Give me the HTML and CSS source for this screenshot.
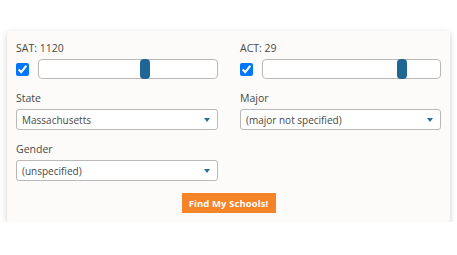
FILE: index.html
```html
<!DOCTYPE html>
<html lang="en">
  <head>
    <meta charset="UTF-8" />
    <meta name="viewport" content="width=device-width, initial-scale=1.0" />
    <title>Find My Schools</title>
    <link rel="stylesheet" href="styles.css">
  </head>

  <body>
    <div class="search-card">
      <div class="search-grid">
        <div class="field">
          <label class="field-label">SAT: 1120</label>
          <div class="score-row">
            <input type="checkbox" checked />
            <input class="score-range" type="range" min="400" max="1600" value="1120" />
          </div>
        </div>
        <div class="field">
          <label class="field-label">ACT: 29</label>
          <div class="score-row">
            <input type="checkbox" checked />
            <input class="score-range" type="range" min="1" max="36" value="29" />
          </div>
        </div>

        <div class="field">
          <label class="field-label">State</label>
          <div class="select-box">
            <span>Massachusetts</span>
            <span class="select-arrow"></span>
          </div>
        </div>
        <div class="field">
          <label class="field-label">Major</label>
          <div class="select-box">
            <span>(major not specified)</span>
            <span class="select-arrow"></span>
          </div>
        </div>

        <div class="field">
          <label class="field-label">Gender</label>
          <div class="select-box">
            <span>(unspecified)</span>
            <span class="select-arrow"></span>
          </div>
        </div>
      </div>

      <div class="search-actions">
        <button class="find-btn">Find My Schools!</button>
      </div>
    </div>
  </body>
</html>
```

FILE: styles.css
```css
body {
  margin: 0;
  padding: 31px 7px 0 7px;
  background-color: #ffffff;
  font-family: "Open Sans", Arial, sans-serif;
  color: #484848;
}

.search-card {
  background-color: #fcfbf9;
  box-shadow: 0 2px 6px rgba(0, 0, 0, 0.2);
  border-radius: 2px;
  padding: 10px 9px 9px 9px;
  height: 191px;
  box-sizing: border-box;
}

.search-grid {
  display: grid;
  grid-template-columns: 202px 201px;
  column-gap: 22px;
  row-gap: 12px;
}

.field {
  display: flex;
  flex-direction: column;
}

.field-label {
  font-size: 10.5px;
  line-height: 14px;
  margin-bottom: 4px;
}

.score-row {
  display: flex;
  align-items: center;
  gap: 9px;
}

.score-row input[type="checkbox"] {
  margin: 0;
  width: 13px;
  height: 13px;
  flex: none;
}

.score-range {
  -webkit-appearance: none;
  appearance: none;
  flex: 1;
  margin: 0;
  height: 20px;
  box-sizing: border-box;
  background: #ffffff;
  border: 1px solid #b9b9b9;
  border-radius: 4px;
}

.score-range::-webkit-slider-thumb {
  -webkit-appearance: none;
  width: 10px;
  height: 20px;
  border-radius: 4px;
  background: #1f6694;
  cursor: pointer;
}

.select-box {
  display: flex;
  align-items: center;
  justify-content: space-between;
  height: 21px;
  box-sizing: border-box;
  padding: 0 7px 0 5px;
  background: #ffffff;
  border: 1px solid #b9b9b9;
  border-radius: 3px;
  font-size: 10px;
}

.select-arrow {
  width: 0;
  height: 0;
  border-left: 3.5px solid transparent;
  border-right: 3.5px solid transparent;
  border-top: 4px solid #2a6f9c;
}

.search-actions {
  display: flex;
  justify-content: center;
  margin-top: 12px;
}

.find-btn {
  background-color: #f58327;
  color: #ffffff;
  border: none;
  width: 94px;
  height: 20px;
  padding: 0;
  font-family: "Open Sans", Arial, sans-serif;
  font-size: 9.5px;
  font-weight: 700;
  letter-spacing: 0.1px;
}
```
